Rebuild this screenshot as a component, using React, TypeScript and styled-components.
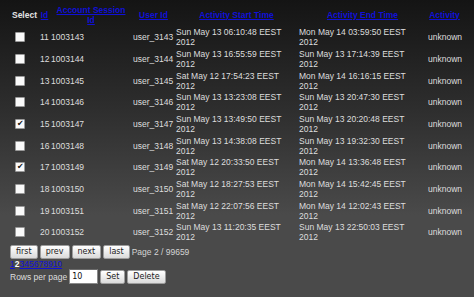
import styled, { createGlobalStyle } from "styled-components";

const GlobalStyle = createGlobalStyle`
    html, body {
        margin: 0;
        padding: 0;
        min-height: 100%;
    }
    body {
        background: linear-gradient(180deg, #141414 0px, #2e2e2e 110px, #4a4a4a 215px, #4a4a4a 100%) no-repeat;
        background-color: #4a4a4a;
        min-height: 297px;
        font-family: "Liberation Sans", Arial, sans-serif;
        font-size: 8.5px;
        color: #dedede;
    }
`;

const PageWrapper = styled.div`
    padding: 5px 0 0 10px;
    display: flex;
    flex-direction: column;
`;

const Table = styled.table`
    border-collapse: collapse;
    border-spacing: 0;
    table-layout: fixed;
    width: 452px;
`;

const HeadCell = styled.th`
    height: 21.67px;
    padding: 0 1px;
    font-weight: bold;
    line-height: 9.5px;
    text-align: center;
    vertical-align: middle;
    color: #e4e4e4;
`;

const SortLink = styled.a`
    color: #1010d8;
    text-decoration: underline;
    cursor: pointer;
`;

const Cell = styled.td<{ $center?: boolean }>`
    height: 21.67px;
    padding: 0 1px;
    line-height: 10px;
    vertical-align: middle;
    text-align: ${(p) => (p.$center ? "center" : "left")};
    white-space: nowrap;
`;

const Check = styled.span<{ $checked: boolean }>`
    display: block;
    width: 8px;
    height: 8px;
    margin-left: 4px;
    background: #fafafa;
    border: 1px solid #9a9a9a;
    border-radius: 1px;
    position: relative;
    &::after {
        content: "${(p) => (p.$checked ? "✔" : "")}";
        position: absolute;
        left: 1px;
        top: -1px;
        font-size: 8px;
        line-height: 10px;
        color: #111;
        font-family: "DejaVu Sans", sans-serif;
    }
`;

const Footer = styled.div`
    display: flex;
    flex-direction: column;
    margin-top: 1.7px;
`;

const PagerRow = styled.div`
    display: flex;
    align-items: center;
    gap: 2px;
    height: 14px;
`;

const Button = styled.button`
    height: 14px;
    padding: 0 5px;
    border: 1px solid #9c9c9c;
    border-radius: 2px;
    background: linear-gradient(180deg, #ffffff, #dadada);
    color: #222;
    font-family: "DejaVu Sans", sans-serif;
    font-size: 8px;
    line-height: 12px;
    cursor: pointer;
`;

const PageInfo = styled.span`
    margin-left: 0;
    color: #d4d4d4;
    white-space: nowrap;
`;

const PageNumbers = styled.div`
    height: 10.5px;
    line-height: 10.5px;
    display: flex;
`;

const PageNumber = styled.a<{ $current?: boolean }>`
    color: ${(p) => (p.$current ? "#ffffff" : "#1010d8")};
    font-weight: ${(p) => (p.$current ? "bold" : "normal")};
    text-decoration: ${(p) => (p.$current ? "none" : "underline")};
`;

const RowsPerPage = styled.div`
    display: flex;
    align-items: center;
    gap: 2px;
    height: 15px;
`;

const RowsInput = styled.input`
    width: 29px;
    height: 15px;
    box-sizing: border-box;
    margin: 0;
    padding: 0 2px;
    border: 1px solid #8a8a8a;
    border-top-color: #6a6a6a;
    background: #ffffff;
    color: #111;
    font-family: "DejaVu Sans", sans-serif;
    font-size: 8px;
`;

const columns = [29, 11, 82, 43, 123, 129, 35];

const rows = [
    { id: 11, session: 1003143, user: "user_3143", start: "Sun May 13 06:10:48 EEST", end: "Mon May 14 03:59:50 EEST", checked: false },
    { id: 12, session: 1003144, user: "user_3144", start: "Sun May 13 16:55:59 EEST", end: "Sun May 13 17:14:39 EEST", checked: false },
    { id: 13, session: 1003145, user: "user_3145", start: "Sat May 12 17:54:23 EEST", end: "Mon May 14 16:16:15 EEST", checked: false },
    { id: 14, session: 1003146, user: "user_3146", start: "Sun May 13 13:23:08 EEST", end: "Sun May 13 20:47:30 EEST", checked: false },
    { id: 15, session: 1003147, user: "user_3147", start: "Sun May 13 13:49:50 EEST", end: "Sun May 13 20:20:48 EEST", checked: true },
    { id: 16, session: 1003148, user: "user_3148", start: "Sun May 13 14:38:08 EEST", end: "Sun May 13 19:32:30 EEST", checked: false },
    { id: 17, session: 1003149, user: "user_3149", start: "Sat May 12 20:33:50 EEST", end: "Mon May 14 13:36:48 EEST", checked: true },
    { id: 18, session: 1003150, user: "user_3150", start: "Sat May 12 18:27:53 EEST", end: "Mon May 14 15:42:45 EEST", checked: false },
    { id: 19, session: 1003151, user: "user_3151", start: "Sat May 12 22:07:56 EEST", end: "Mon May 14 12:02:43 EEST", checked: false },
    { id: 20, session: 1003152, user: "user_3152", start: "Sun May 13 11:20:35 EEST", end: "Sun May 13 22:50:03 EEST", checked: false },
];

const App = () => {
    return (
        <>
            <GlobalStyle />
            <PageWrapper>
                <Table>
                    <colgroup>
                        {columns.map((w, i) => (
                            <col key={i} style={{ width: w }} />
                        ))}
                    </colgroup>
                    <thead>
                        <tr>
                            <HeadCell>Select</HeadCell>
                            <HeadCell><SortLink>Id</SortLink></HeadCell>
                            <HeadCell><SortLink>Account Session</SortLink><br /><SortLink>Id</SortLink></HeadCell>
                            <HeadCell><SortLink>User Id</SortLink></HeadCell>
                            <HeadCell><SortLink>Activity Start Time</SortLink></HeadCell>
                            <HeadCell><SortLink>Activity End Time</SortLink></HeadCell>
                            <HeadCell><SortLink>Activity</SortLink></HeadCell>
                        </tr>
                    </thead>
                    <tbody>
                        {rows.map((row) => (
                            <tr key={row.id}>
                                <Cell><Check $checked={row.checked} /></Cell>
                                <Cell>{row.id}</Cell>
                                <Cell>{row.session}</Cell>
                                <Cell>{row.user}</Cell>
                                <Cell>{row.start}<br />2012</Cell>
                                <Cell>{row.end}<br />2012</Cell>
                                <Cell>unknown</Cell>
                            </tr>
                        ))}
                    </tbody>
                </Table>
                <Footer>
                    <PagerRow>
                        <Button>first</Button>
                        <Button>prev</Button>
                        <Button>next</Button>
                        <Button>last</Button>
                        <PageInfo>Page 2 / 99659</PageInfo>
                    </PagerRow>
                    <PageNumbers>
                        {[1, 2, 3, 4, 5, 6, 7, 8, 9, 10].map((n) => (
                            <PageNumber key={n} $current={n === 2}>{n}</PageNumber>
                        ))}
                    </PageNumbers>
                    <RowsPerPage>
                        <span>Rows per page</span>
                        <RowsInput defaultValue="10" />
                        <Button>Set</Button>
                        <Button>Delete</Button>
                    </RowsPerPage>
                </Footer>
            </PageWrapper>
        </>
    );
};

export default App;
